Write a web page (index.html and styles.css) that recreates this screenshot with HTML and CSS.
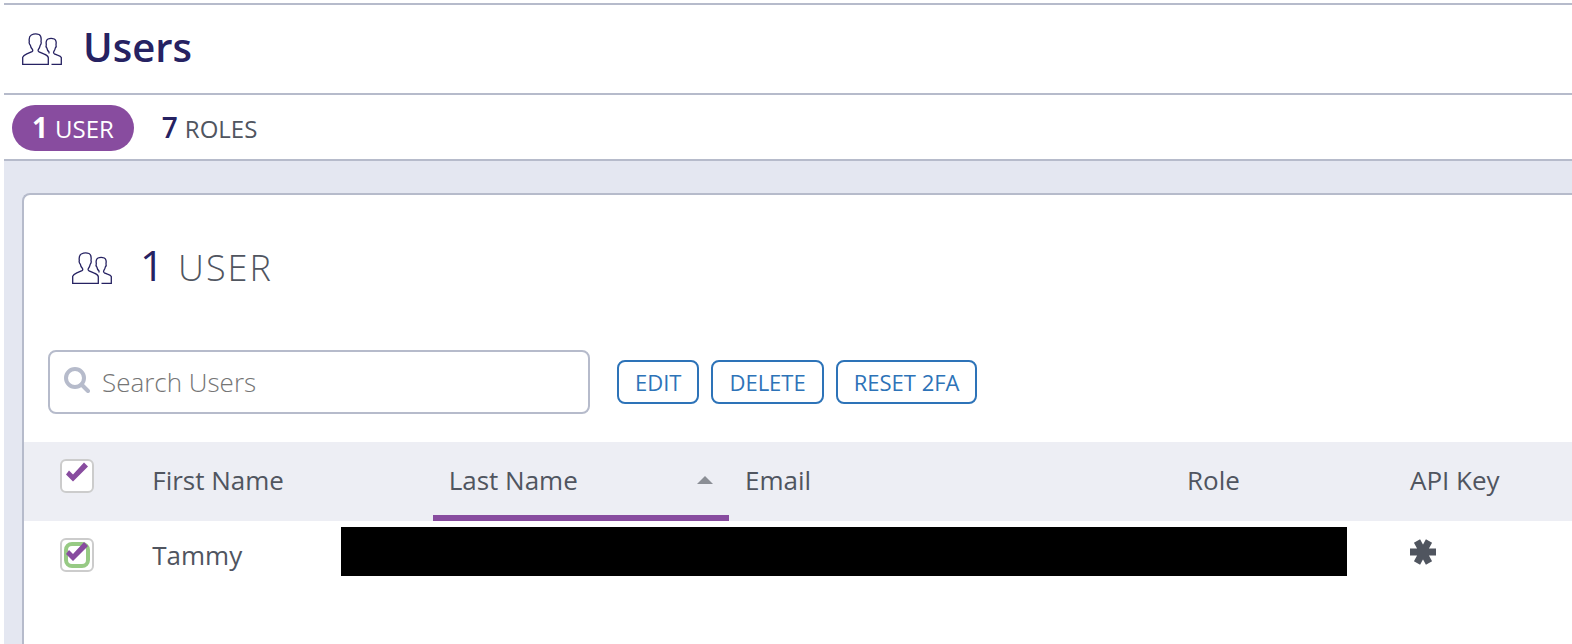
FILE: index.html
```html
<!DOCTYPE html>
<html lang="en">
<head>
<meta charset="utf-8">
<meta name="viewport" content="width=device-width, initial-scale=1">
<title>Users</title>
<link rel="stylesheet" href="styles.css">
</head>
<body>
<svg class="symbols" aria-hidden="true">
  <symbol id="users" viewBox="0 0 40 32">
    <path d="M.7 31.3V24.2Q1.500 22.500 4.800 20.900L10 18.600Q11.200 18 10.500 16.500Q8.600 14.500 8.300 12.200Q6.700 10.500 7.300 8.500Q6.600 3.500 9.300 2Q13 .2 17 1.500Q19.800 3 19 8.500Q19.700 10.500 18.300 12.200Q17.800 14.700 16.200 16.800Q15.800 18.300 17 18.800L21.700 20.900Q25.700 22.300 26.300 24.500V31.300Z"/>
    <path d="M29.500 31.300H39.300V24.500Q38.800 23.200 35.500 22.200L32.300 20.800Q31 20 31.800 18.500Q33 17 33.300 15Q34.700 13.500 34 11.800Q34.800 7.500 32.300 6Q29 4.800 26 6Q23.500 7.500 24.300 11.800Q23.500 13.500 24.900 15.200Q25.200 17.500 27 19V20.500"/>
  </symbol>
</svg>

<header class="page-header">
  <svg class="users-icon" aria-hidden="true"><use href="#users"/></svg>
  <h1 class="page-title">Users</h1>
</header>

<nav class="tabs" aria-label="Sections">
  <a class="tab tab-active" href="#"><b class="tab-count">1</b>USER</a>
  <a class="tab" href="#"><b class="tab-count">7</b>ROLES</a>
</nav>

<main class="content">
  <section class="panel">
    <div class="panel-header">
      <svg class="users-icon" aria-hidden="true"><use href="#users"/></svg>
      <h2 class="panel-title"><b class="panel-count">1</b>USER</h2>
    </div>

    <div class="toolbar">
      <label class="search">
        <svg class="search-icon" viewBox="0 0 26 26" role="img" aria-label="Search">
          <circle cx="11" cy="11" r="9"/>
          <path d="M17.500 17.500L24 24"/>
        </svg>
        <input class="search-input" type="text" placeholder="Search Users">
      </label>
      <div class="actions">
        <button class="button" type="button">EDIT</button>
        <button class="button" type="button">DELETE</button>
        <button class="button" type="button">RESET 2FA</button>
      </div>
    </div>

    <table class="table">
      <colgroup>
        <col class="col-check"><col class="col-name"><col class="col-name"><col class="col-email"><col class="col-role"><col>
      </colgroup>
      <thead>
        <tr>
          <th class="check-cell"><input class="check" type="checkbox" checked aria-label="Select all users"></th>
          <th>First Name</th>
          <th class="sorted" aria-sort="ascending"><span class="sort-label">Last Name <i class="sort-arrow"></i></span></th>
          <th>Email</th>
          <th>Role</th>
          <th>API Key</th>
        </tr>
      </thead>
      <tbody>
        <tr>
          <td class="check-cell"><input class="check check-focus" type="checkbox" checked aria-label="Select Tammy"></td>
          <td>Tammy</td>
          <td></td>
          <td></td>
          <td></td>
          <td>
            <svg class="key-icon" viewBox="0 0 26 26" role="img" aria-label="API key">
              <path d="M0 13H26M7 2L19 24M19 2L7 24"/>
            </svg>
            <span class="redaction"></span>
          </td>
        </tr>
      </tbody>
    </table>
  </section>
</main>
</body>
</html>
```
FILE: styles.css
```css
* {
  box-sizing: border-box;
}

body {
  display: flex;
  flex-direction: column;
  min-height: 100vh;
  margin: 0;
  padding: 3px 0 0 4px;
  background: #fff;
  color: #50555f;
  font-family: "Open Sans", "Noto Sans", sans-serif;
  font-size: 26px;
  line-height: 36px;
}

.symbols {
  position: absolute;
  width: 0;
  height: 0;
}

.users-icon {
  flex: none;
  width: 40px;
  height: 32px;
  fill: none;
  stroke: #262262;
  stroke-width: 1.3;
}

.page-header {
  display: flex;
  align-items: center;
  gap: 21px;
  height: 92px;
  padding: 0 18px;
  border-top: 2px solid #b6bbcb;
  border-bottom: 2px solid #b6bbcb;
}

.page-title {
  margin: 0;
  padding-bottom: 4px;
  color: #262262;
  font-size: 40px;
  font-weight: 600;
  line-height: 56px;
}

.tabs {
  display: flex;
  align-items: center;
  gap: 8px;
  height: 66px;
  padding: 2px 8px 0;
  border-bottom: 2px solid #b6bbcb;
}

.tab {
  display: flex;
  align-items: baseline;
  gap: 7px;
  padding: 4px 20px;
  border-radius: 23px;
  color: #50555f;
  font-size: 24px;
  text-decoration: none;
}

.tab-count {
  color: #262262;
  font-size: 28px;
  font-weight: 600;
}

.tab-active {
  background: #884c9f;
}

.tab-active,
.tab-active .tab-count {
  color: #fff;
}

.tab-active .tab-count {
  font-weight: 700;
}

.content {
  display: flex;
  flex: 1;
  padding: 32px 0 0 18px;
  background: #e4e7f1;
}

.panel {
  flex: 1;
  min-width: 0;
  border: 2px solid #b6bbcb;
  border-width: 2px 0 0 2px;
  border-radius: 8px 0 0;
  background: #fff;
}

.panel-header {
  display: flex;
  align-items: center;
  gap: 28px;
  padding: 42px 48px 0;
}

.panel-title {
  display: flex;
  align-items: baseline;
  gap: 12px;
  margin: 0;
  padding-bottom: 2px;
  font-size: 36px;
  font-weight: 300;
  letter-spacing: 2px;
  line-height: 56px;
}

.panel-count {
  color: #262262;
  font-size: 42px;
  font-weight: 500;
}

.toolbar {
  display: flex;
  align-items: center;
  gap: 27px;
  padding: 52px 24px 28px;
}

.search {
  display: flex;
  align-items: center;
  gap: 12px;
  width: 542px;
  height: 64px;
  padding: 0 14px;
  border: 2px solid #b6bbcb;
  border-radius: 8px;
}

.search-icon {
  flex: none;
  width: 26px;
  height: 26px;
  margin-bottom: 4px;
  fill: none;
  stroke: #b6bbcb;
  stroke-width: 4;
  stroke-linecap: round;
}

.search-input {
  flex: 1;
  min-width: 0;
  padding: 0;
  border: 0;
  outline: 0;
  background: none;
  color: #50555f;
  font: inherit;
  font-weight: 300;
}

.search-input::placeholder {
  color: #757575;
}

.actions {
  display: flex;
  gap: 12px;
}

.button {
  height: 44px;
  padding: 0 16px;
  border: 2px solid #2d73b8;
  border-radius: 8px;
  background: #fff;
  color: #2d73b8;
  font: inherit;
  font-size: 22px;
  line-height: 36px;
}

.table {
  position: relative;
  width: 100%;
  border-collapse: collapse;
  table-layout: fixed;
}

.col-check {
  width: 7.25%;
}

.col-name {
  width: 19.15%;
}

.col-email {
  width: 28.55%;
}

.col-role {
  width: 14.4%;
}

.table th,
.table td {
  padding: 0 16px 2px;
  font-weight: 400;
  text-align: left;
}

.table th {
  height: 79px;
  padding-bottom: 4px;
  background: #edeef4;
}

.table td {
  height: 70px;
}

.table .check-cell {
  padding: 0 36px 12px;
}

.table td.check-cell {
  padding-bottom: 2px;
}

.table .sorted {
  box-shadow: inset 0 -6px #884c9f;
}

.sort-label {
  display: flex;
  align-items: center;
  justify-content: space-between;
}

.sort-arrow {
  border: 8px solid transparent;
  border-top: 0;
  border-bottom-color: #8b8e95;
}

.check {
  appearance: none;
  position: relative;
  display: block;
  width: 34px;
  height: 34px;
  margin: 0;
  border: 2px solid #ccc;
  border-radius: 6px;
  background: #fff;
}

.check:checked::after {
  content: "";
  position: absolute;
  inset: -2px;
  background: #884c9f;
  clip-path: polygon(6px 16px, 9px 12px, 13px 16px, 24px 4px, 28px 8px, 13px 23px);
}

.check-focus::before {
  content: "";
  position: absolute;
  inset: 2px;
  border: 4px solid #97ca84;
  border-radius: 8px;
}

.key-icon {
  display: block;
  width: 26px;
  height: 26px;
  margin-bottom: 6px;
  stroke: #50555f;
  stroke-width: 7;
}

.redaction {
  position: absolute;
  top: 85px;
  left: 317px;
  width: 65%;
  height: 49px;
  background: #000;
}
```
